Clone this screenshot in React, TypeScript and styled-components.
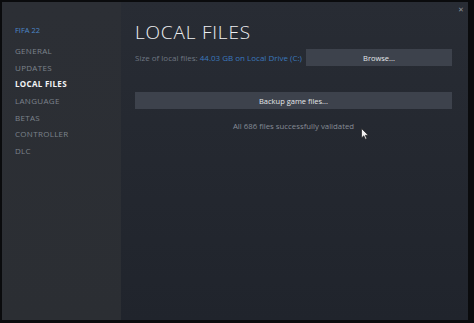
import React from 'react'
import styled, { createGlobalStyle } from 'styled-components'

const Global = createGlobalStyle`
html, body {
  margin: 0;
  padding: 0;
  background: #0a0b0d;
}
* { box-sizing: border-box; }
`

const menu = ['GENERAL', 'UPDATES', 'LOCAL FILES', 'LANGUAGE', 'BETAS', 'CONTROLLER', 'DLC']

const App = () => {
  return (
    <>
      <Global />
      <Frame>
        <Window>
          <Sidebar>
            <Game>FIFA 22</Game>
            {menu.map((m) => (
              <MenuItem key={m} active={m === 'LOCAL FILES'}>{m}</MenuItem>
            ))}
          </Sidebar>
          <Main>
            <Close>✕</Close>
            <Title>LOCAL FILES</Title>
            <SizeRow>
              <SizeText>
                Size of local files: <Link>44.03 GB on Local Drive (C:)</Link>
              </SizeText>
              <Button wide={146}>Browse...</Button>
            </SizeRow>
            <Button>Backup game files...</Button>
            <Status>
              All 686 files successfully validated
              <Cursor viewBox="0 0 8 12" width="8" height="12">
                <path d="M0.5 0.5 L0.5 10 L2.8 7.8 L4.4 11.3 L5.8 10.7 L4.3 7.3 L7.3 7.3 Z" fill="#f2f2f2" stroke="#222" strokeWidth="0.7" />
              </Cursor>
            </Status>
          </Main>
        </Window>
      </Frame>
    </>
  )
}

export default App

const Frame = styled.div`
width: 474px;
height: 323px;
padding: 2px 6px 3px 2px;
background: #0a0b0d;
font-family: "Open Sans", "Noto Sans", sans-serif;
`
const Window = styled.div`
width: 100%;
height: 100%;
display: grid;
grid-template-columns: 119px 1fr;
`
const Sidebar = styled.div`
background: linear-gradient(180deg, #2c2f35 0%, #2b2e33 100%);
padding: 22px 0 0 13px;
display: flex;
flex-direction: column;
`
const Game = styled.div`
color: #4c87c8;
font-size: 7.5px;
height: 21px;
line-height: 12px;
`
const MenuItem = styled.div<{ active?: boolean }>`
color: ${(p) => (p.active ? '#f2f4f6' : '#7c838c')};
font-weight: ${(p) => (p.active ? 700 : 400)};
font-size: 8px;
letter-spacing: 0.3px;
height: 16.7px;
line-height: 12px;
`
const Main = styled.div`
position: relative;
background: linear-gradient(180deg, #282c34 0%, #242830 50%, #20242c 100%);
padding: 17px 16px 0 14px;
display: flex;
flex-direction: column;
`
const Close = styled.div`
position: absolute;
top: 3px;
right: 4px;
color: #8c929a;
font-size: 7px;
`
const Title = styled.div`
color: #eef0f2;
font-size: 19px;
font-weight: 300;
letter-spacing: 0.8px;
line-height: 26px;
margin-bottom: 4px;
`
const SizeRow = styled.div`
display: flex;
align-items: center;
justify-content: space-between;
margin-bottom: 26px;
`
const SizeText = styled.div`
color: #6f7782;
font-size: 8px;
white-space: nowrap;
`
const Link = styled.span`
color: #3b78bd;
`
const Button = styled.div<{ wide?: number }>`
width: ${(p) => (p.wide ? `${p.wide}px` : '100%')};
height: 17px;
background: #3d424c;
color: #e4e7ea;
font-size: 7.5px;
display: flex;
align-items: center;
justify-content: center;
`
const Status = styled.div`
position: relative;
margin-top: 12px;
text-align: center;
color: #858c96;
font-size: 7.8px;
`
const Cursor = styled.svg`
position: absolute;
left: 226px;
top: 7px;
`
